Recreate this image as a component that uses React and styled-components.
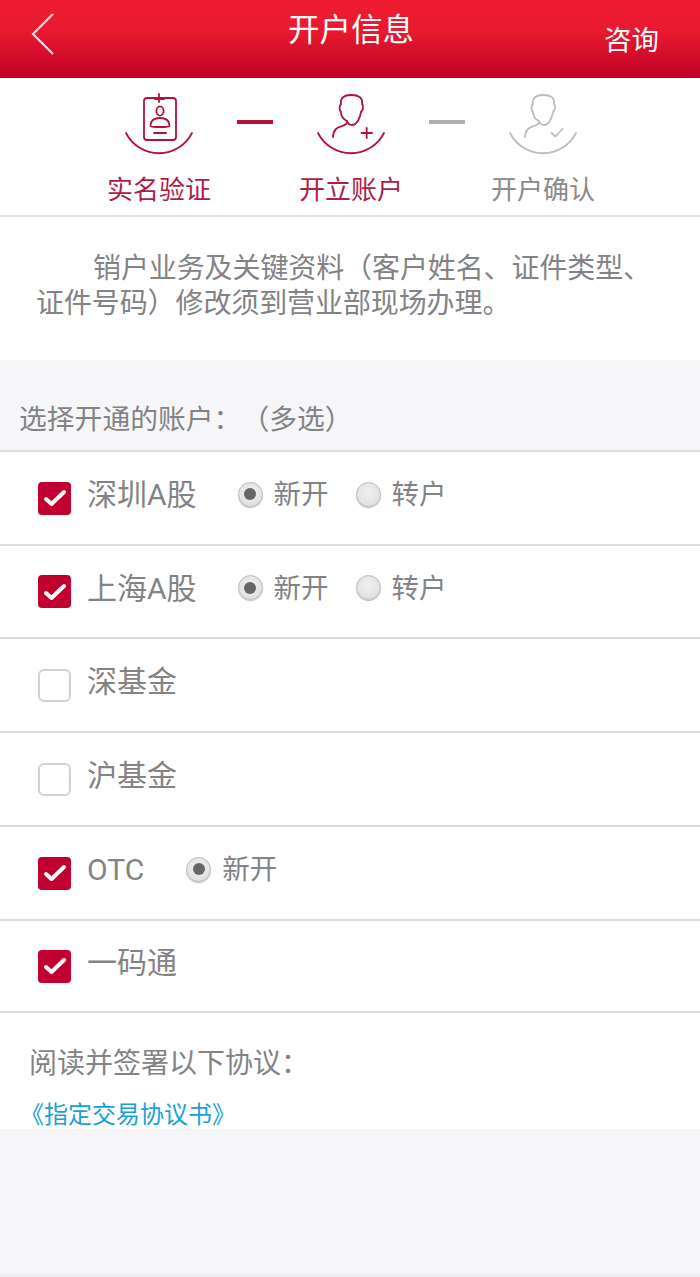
import React from "react";
import styled, { createGlobalStyle } from "styled-components";

const RED = "#b5103c";
const GREY_ICON = "#bdbdbd";

const GlobalStyle = createGlobalStyle`
  html, body {
    margin: 0;
    padding: 0;
    background: #f6f6f8;
  }
  body {
    font-family: Roboto, "Noto Sans CJK SC", sans-serif;
    color: #838385;
    text-spacing-trim: space-all;
  }
`;

const Page = styled.div`
  width: 700px;
  height: 1277px;
  overflow: hidden;
  display: flex;
  flex-direction: column;
`;

const Header = styled.header`
  height: 78px;
  display: grid;
  grid-template-columns: 1fr auto 1fr;
  background: linear-gradient(to bottom, #ee1c30 0%, #e81a2f 40%, #bf0026 100%);
  color: #fff;
`;

const BackIcon = styled.svg`
  width: 26px;
  height: 44px;
  margin: 12px 0 0 30px;
`;

const Title = styled.h1`
  margin: 10px 0 0 2px;
  font-size: 31.5px;
  line-height: 42px;
  font-weight: 400;
`;

const Consult = styled.div`
  justify-self: end;
  margin: 22px 41px 0 0;
  font-size: 27.5px;
  line-height: 38px;
`;

const Steps = styled.section`
  height: 137px;
  background: #fff;
  display: flex;
  justify-content: center;
  gap: 26px;
  box-sizing: border-box;
  padding: 14px 0 0 2px;
`;

const Step = styled.div`
  width: 104px;
  display: flex;
  flex-direction: column;
  align-items: center;
  color: ${(p) => (p.$active ? "#ae1c48" : "#8a8a8a")};
`;

const StepIcon = styled.svg`
  width: 72px;
  height: 66px;
  display: block;
  fill: none;
  stroke: ${(p) => (p.$active ? RED : GREY_ICON)};
  stroke-width: 1.8;
  stroke-linecap: round;
  stroke-linejoin: round;
`;

const StepLabel = styled.div`
  margin-top: 14px;
  font-size: 26px;
  line-height: 36px;
  white-space: nowrap;
`;

const StepDash = styled.div`
  width: 36px;
  height: 4px;
  margin-top: 28px;
  background: ${(p) => (p.$active ? RED : "#b0b0b0")};
`;

const Notice = styled.section`
  height: 145px;
  box-sizing: border-box;
  background: #fff;
  border-top: 2px solid #e2e2e6;
  padding: 35px 36px 0;
  font-size: 28px;
  line-height: 34.5px;
  text-indent: 57px;
  letter-spacing: -0.1px;
`;

const SectionTitle = styled.h2`
  height: 90px;
  margin: 0;
  box-sizing: border-box;
  padding: 41px 0 0 19px;
  font-size: 27.8px;
  line-height: 38px;
  font-weight: 400;
  background: #f6f6f8;
  white-space: nowrap;
`;

const AccountRow = styled.div`
  height: ${(p) => p.$height}px;
  box-sizing: border-box;
  background: #fff;
  border-top: 2px solid #dcdce0;
  display: flex;
  align-items: center;
  padding-left: 38px;
`;

const CheckBox = styled.span`
  width: 33px;
  height: 33px;
  flex: none;
  box-sizing: border-box;
  border-radius: ${(p) => (p.$checked ? "4px" : "6px")};
  display: flex;
  align-items: center;
  justify-content: center;
  background: ${(p) => (p.$checked ? "#c20030" : "#fff")};
  border: ${(p) => (p.$checked ? "0" : "2px solid #d2d2d6")};
`;

const AccountName = styled.span`
  margin-left: 16px;
  font-size: 30px;
  line-height: 40px;
  white-space: nowrap;
  position: relative;
  top: -3px;
`;

const RadioGroup = styled.div`
  display: flex;
  align-items: center;
  gap: 27px;
  margin-left: ${(p) => p.$offset}px;
  position: relative;
  top: -3px;
`;

const RadioOption = styled.label`
  display: flex;
  align-items: center;
  gap: 11px;
  font-size: 27.5px;
  line-height: 38px;
`;

const RadioDot = styled.span`
  width: 25px;
  height: 25px;
  flex: none;
  margin-bottom: 2px;
  box-sizing: border-box;
  border-radius: 50%;
  border: 1px solid #bbb;
  background: radial-gradient(circle at 50% 40%, #f0f0f0 0%, #dcdcdc 100%);
  box-shadow: 0 1px 1px #bbb;
  display: flex;
  align-items: center;
  justify-content: center;
  &::after {
    content: "";
    width: 12px;
    height: 12px;
    border-radius: 50%;
    background: ${(p) => (p.$checked ? "#666" : "transparent")};
  }
`;

const Agreement = styled.section`
  height: 118px;
  overflow: hidden;
  box-sizing: border-box;
  background: #fff;
  border-top: 2px solid #dcdce0;
  padding: 32px 0 0 29px;
`;

const AgreementTitle = styled.div`
  font-size: 28px;
  line-height: 38px;
`;

const AgreementLink = styled.a`
  display: block;
  margin: 16px 0 0 -9px;
  font-size: 24px;
  line-height: 32px;
  color: #1b9fd8;
`;

const Footer = styled.div`
  flex: 1;
  background: #f6f6f8;
  border-bottom: 3px solid #eeeef0;
`;

const accounts = [
  { name: "深圳A股", checked: true, height: 94, offset: 41, options: [["新开", true], ["转户", false]] },
  { name: "上海A股", checked: true, height: 93, offset: 41, options: [["新开", true], ["转户", false]] },
  { name: "深基金", checked: false, height: 94 },
  { name: "沪基金", checked: false, height: 94 },
  { name: "OTC", checked: true, height: 94, offset: 42, options: [["新开", true]] },
  { name: "一码通", checked: true, height: 92 },
];

const Arc = () => <path d="M3 41 A37 37 0 0 0 69 41" />;

const Person = () => (
  <>
    <path d="M32 29 C28 27 26 23 26 20 C24 18 24 14 26 12 C25 6 29 3 36 3 C44 3 48 6 47 12 C49 14 48 18 46 20 C45 26 42 33 37 33 C35 33 33 32 32 29" />
    <path d="M32 30 C32 35 24 33 21 37 C19 39 18 41 18 45" />
  </>
);

const BadgeIcon = ({ active }) => (
  <StepIcon $active={active} viewBox="0 0 72 66">
    <Arc />
    <rect x="21" y="6" width="32" height="42" rx="3" />
    <path d="M36 2 V10 M32 7 H41" />
    <ellipse cx="37" cy="19" rx="3.6" ry="4.6" />
    <path d="M27.5 34 C27.5 28 32 26 37 26 C42 26 46.5 28 46.5 34 C46.5 35.5 27.5 35.5 27.5 34 Z" />
    <path d="M31 41 H43" />
  </StepIcon>
);

const AddUserIcon = ({ active }) => (
  <StepIcon $active={active} viewBox="0 0 72 66">
    <Arc />
    <Person />
    <path d="M46.5 41 H57 M51.7 36 V46" />
  </StepIcon>
);

const ConfirmUserIcon = ({ active }) => (
  <StepIcon $active={active} viewBox="0 0 72 66">
    <Arc />
    <Person />
    <path d="M44.5 41 L48.5 44.5 L55.5 37" />
  </StepIcon>
);

const CheckMark = () => (
  <svg width="24" height="20" viewBox="0 0 24 20" fill="none">
    <path d="M3 11 L8.5 16 L21 4" stroke="#fff" strokeWidth="4" strokeLinecap="round" strokeLinejoin="round" />
  </svg>
);

const App = () => (
  <Page>
    <GlobalStyle />
    <Header>
      <BackIcon viewBox="0 0 26 44" fill="none">
        <path d="M23 2 L3 22 L23 42" stroke="#fbdde0" strokeWidth="2.2" />
      </BackIcon>
      <Title>开户信息</Title>
      <Consult>咨询</Consult>
    </Header>
    <Steps>
      <Step $active>
        <BadgeIcon active />
        <StepLabel>实名验证</StepLabel>
      </Step>
      <StepDash $active />
      <Step $active>
        <AddUserIcon active />
        <StepLabel>开立账户</StepLabel>
      </Step>
      <StepDash />
      <Step>
        <ConfirmUserIcon />
        <StepLabel>开户确认</StepLabel>
      </Step>
    </Steps>
    <Notice>销户业务及关键资料（客户姓名、证件类型、证件号码）修改须到营业部现场办理。</Notice>
    <SectionTitle>选择开通的账户：（多选）</SectionTitle>
    {accounts.map((account) => (
      <AccountRow key={account.name} $height={account.height}>
        <CheckBox $checked={account.checked}>{account.checked && <CheckMark />}</CheckBox>
        <AccountName>{account.name}</AccountName>
        {account.options && (
          <RadioGroup $offset={account.offset}>
            {account.options.map(([label, checked]) => (
              <RadioOption key={label}>
                <RadioDot $checked={checked} />
                {label}
              </RadioOption>
            ))}
          </RadioGroup>
        )}
      </AccountRow>
    ))}
    <Agreement>
      <AgreementTitle>阅读并签署以下协议：</AgreementTitle>
      <AgreementLink>《指定交易协议书》</AgreementLink>
    </Agreement>
    <Footer />
  </Page>
);

export default App;
